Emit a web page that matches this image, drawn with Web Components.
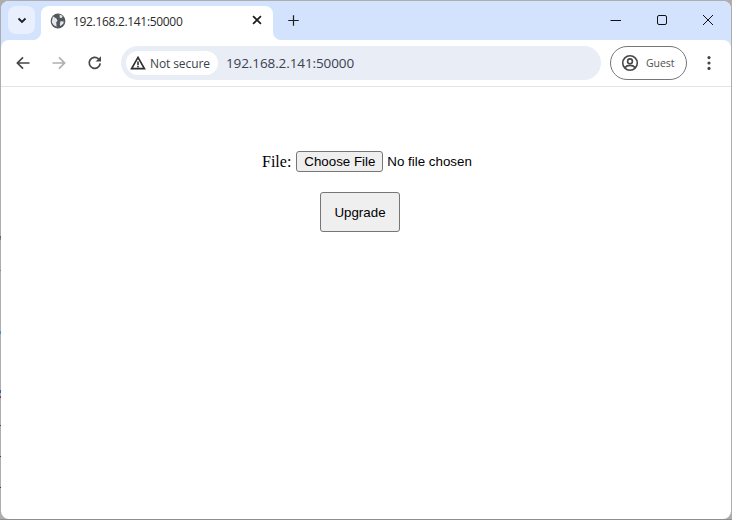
<!DOCTYPE html>
<html>
<head>
<meta charset="utf-8">
<title>192.168.2.141:50000</title>
<style>
  html, body { margin: 0; padding: 0; background: #fff; }
</style>
</head>
<body>
<browser-window>
  <tab-strip slot="strip" title-text="192.168.2.141:50000"></tab-strip>
  <tool-bar slot="bar" url="192.168.2.141:50000"></tool-bar>
  <upgrade-form></upgrade-form>
</browser-window>

<script>
const ICONS = {
  chevron: '<path d="M5.5 7.5 9 11 12.5 7.5" fill="none" stroke="currentColor" stroke-width="1.8"/>',
  globe: '<circle cx="8" cy="8" r="7.4" fill="#54585d"/><path d="M3 3.6 6.4 5.6l1.2 2.2-1.4 1.4.4 4.6C3.8 13 2 10.5 1.8 8.6zM9.6 1.4l3 1.6-.6 1.8-2.2.2zM10.4 8.2l3.4.2-.4 2-2.8 2.6-.8-1z" fill="#e4e7ec"/>',
  close: '<path d="M3.5 3.5 12.5 12.5M12.5 3.5 3.5 12.5" fill="none" stroke="currentColor" stroke-width="2"/>',
  plus: '<path d="M8 1.5v13M1.5 8h13" fill="none" stroke="currentColor" stroke-width="1.5"/>',
  back: '<path d="M14.5 8H2.6M8 2.4 2.4 8 8 13.6" fill="none" stroke="currentColor" stroke-width="1.7"/>',
  forward: '<path d="M1.5 8h11.9M8 2.4 13.6 8 8 13.6" fill="none" stroke="currentColor" stroke-width="1.7"/>',
  reload: '<path d="M13.2 8.4A5.5 5.5 0 1 1 11.6 4" fill="none" stroke="currentColor" stroke-width="1.7"/><path d="M14 1.2V6.6H8.6z" fill="currentColor"/>',
  warn: '<path d="M8 2.4 14.4 13.6H1.6z" fill="none" stroke="currentColor" stroke-width="1.7" stroke-linejoin="miter"/><path d="M7.2 6.4h1.6v3.8H7.2zM7.2 11h1.6v1.4H7.2z" fill="currentColor"/>',
  person: '<circle cx="9" cy="9" r="7.3" fill="none" stroke="currentColor" stroke-width="1.6"/><circle cx="9" cy="7.3" r="2.4" fill="none" stroke="currentColor" stroke-width="1.6"/><path d="M3.9 13.6c1.4-1.6 3.2-2.2 5.1-2.2s3.7.6 5.1 2.2" fill="none" stroke="currentColor" stroke-width="1.6"/>',
  dots: '<circle cx="8" cy="2.6" r="1.6" fill="currentColor"/><circle cx="8" cy="8" r="1.6" fill="currentColor"/><circle cx="8" cy="13.4" r="1.6" fill="currentColor"/>',
  minimize: '<path d="M0.5 6.5h10.5" fill="none" stroke="currentColor" stroke-width="1"/>',
  maximize: '<rect x="1.5" y="1.5" width="9" height="9" rx="1.5" fill="none" stroke="currentColor" stroke-width="1"/>',
  winclose: '<path d="M1 1 11 11M11 1 1 11" fill="none" stroke="currentColor" stroke-width="1"/>'
};

// bits of the desktop that show through at the left edge of the window
const EDGE_SPECKS = [
  [236, 2, '#2f6db5'], [238, 2, '#a8752f'], [270, 1, '#4a90d9'], [331, 3, '#3d8fd0'],
  [390, 3, '#2f5fa8'], [396, 2, '#8a3f4a'], [425, 1, '#7a2b3a'], [456, 1, '#4a3a3a'], [487, 1, '#4a3a3a']
];

function icon( name, size, box ) {
  return `<svg width="${size}" height="${size}" viewBox="0 0 ${box} ${box}" aria-hidden="true">${ICONS[name]}</svg>`;
}

class BrowserWindow extends HTMLElement {
  constructor() {
    super();
    const specks = EDGE_SPECKS.map( ( [top, height, colour] ) => {
      return `linear-gradient(${colour},${colour}) 0 ${top}px / 1px ${height}px no-repeat`;
    } ).join( ',' );
    const root = this.attachShadow( {mode: 'open'} );
    root.innerHTML = `
      <style>
      :host {
        background: ${specks}, linear-gradient(#8e8e8e,#8e8e8e) 0 519px / 100% 1px no-repeat, #adadad;
        box-sizing: border-box;
        display: block;
        height: 520px;
        overflow: hidden;
        width: 732px;
      }
      .frame {
        background: #fff;
        border-radius: 8px;
        box-sizing: border-box;
        display: flex;
        flex-direction: column;
        height: 518px;
        margin: 1px 1px 0 1px;
        overflow: hidden;
      }
      main { flex-grow: 1; }
      </style>
      <div class="frame">
        <slot name="strip"></slot>
        <slot name="bar"></slot>
        <main><slot></slot></main>
      </div>
    `;
  }
}

class TabStrip extends HTMLElement {
  constructor() {
    super();
    const root = this.attachShadow( {mode: 'open'} );
    root.innerHTML = `
      <style>
      :host {
        align-items: flex-end;
        background: #d3e3fd;
        color: #1f1f1f;
        display: flex;
        flex-shrink: 0;
        font-family: 'Open Sans', sans-serif;
        height: 39px;
      }
      button {
        align-items: center;
        background: none;
        border: none;
        color: inherit;
        display: flex;
        justify-content: center;
        margin: 0;
        padding: 0;
      }
      .list {
        align-self: flex-start;
        background: #e8f0fe;
        border-radius: 8px;
        height: 28px;
        margin: 5px 6px 0 7px;
        width: 27px;
      }
      .tab {
        align-items: center;
        background: #fff;
        border-radius: 8px 8px 0 0;
        box-sizing: border-box;
        display: flex;
        height: 34px;
        padding: 0 8px 4px 9px;
        position: relative;
        width: 232px;
      }
      .tab::before, .tab::after {
        bottom: 0;
        content: '';
        height: 8px;
        position: absolute;
        width: 8px;
      }
      .tab::before {
        background: radial-gradient( circle at 0 0, #d3e3fd 7.5px, #fff 8.5px );
        left: -8px;
      }
      .tab::after {
        background: radial-gradient( circle at 100% 0, #d3e3fd 7.5px, #fff 8.5px );
        right: -8px;
      }
      .title {
        color: #2b2b2b;
        flex-grow: 1;
        font-family: 'Open Sans', sans-serif;
        font-size: 12px;
        letter-spacing: -0.32px;
        margin-left: 7px;
        white-space: nowrap;
      }
      .close { height: 16px; margin-top: -2px; width: 16px; }
      .new {
        align-self: flex-start;
        height: 16px;
        margin: 11px 0 0 12px;
        width: 16px;
      }
      .spacer { flex-grow: 1; }
      .caption {
        align-self: flex-start;
        color: #111;
        display: flex;
        height: 12px;
        margin-top: 13px;
      }
      .caption button { height: 12px; width: 12px; }
      .min { margin-right: 34px; }
      .max { margin-right: 34px; }
      .end { margin-right: 17px; }
      </style>
      <button class="list">${icon( 'chevron', 18, 18 )}</button>
      <div class="tab">
        ${icon( 'globe', 16, 16 )}
        <span class="title"></span>
        <button class="close">${icon( 'close', 14, 16 )}</button>
      </div>
      <button class="new">${icon( 'plus', 13, 16 )}</button>
      <div class="spacer"></div>
      <div class="caption">
        <button class="min">${icon( 'minimize', 12, 12 )}</button>
        <button class="max">${icon( 'maximize', 12, 12 )}</button>
        <button class="end">${icon( 'winclose', 12, 12 )}</button>
      </div>
    `;
    root.querySelector( '.title' ).textContent = this.getAttribute( 'title-text' );
  }
}

class ToolBar extends HTMLElement {
  constructor() {
    super();
    const root = this.attachShadow( {mode: 'open'} );
    root.innerHTML = `
      <style>
      :host {
        background: #d3e3fd;
        display: block;
        flex-shrink: 0;
      }
      .bar {
        align-items: center;
        background: #fff;
        border-bottom: 1px solid #e1e3e6;
        border-radius: 8px 8px 0 0;
        color: #474747;
        display: flex;
        font-family: 'Open Sans', sans-serif;
        height: 46px;
        padding-left: 14px;
      }
      button {
        align-items: center;
        background: none;
        border: none;
        color: inherit;
        display: flex;
        justify-content: center;
        margin: 0;
        padding: 0;
      }
      .nav { height: 16px; width: 16px; }
      .forward { color: #adb0b4; margin-left: 20px; }
      .reload { margin-left: 20px; }
      .omni {
        align-items: center;
        background: #e9edf6;
        border-radius: 17px;
        box-sizing: border-box;
        display: flex;
        height: 34px;
        margin-left: 18px;
        padding-left: 5px;
        width: 480px;
      }
      .chip {
        align-items: center;
        background: #fff;
        border-radius: 12px;
        box-sizing: border-box;
        color: #3a3f4a;
        display: flex;
        font-size: 12px;
        height: 24px;
        padding-left: 4px;
        width: 92px;
      }
      .chip svg { color: #2f2f2f; margin-right: 4px; }
      .chip span { letter-spacing: -0.1px; white-space: nowrap; }
      .url {
        color: #3a4150;
        font-family: 'Open Sans', sans-serif;
        font-size: 13.5px;
        letter-spacing: -0.1px;
        margin-left: 8px;
        white-space: nowrap;
      }
      .guest {
        align-items: center;
        border: 1px solid #747775;
        border-radius: 17px;
        box-sizing: border-box;
        display: flex;
        font-size: 10.5px;
        height: 34px;
        margin-left: 9px;
        padding-left: 10px;
        width: 77px;
      }
      .guest span { color: #4f4f4f; letter-spacing: -0.05px; margin-left: 7px; }
      .more { height: 16px; margin-left: 14px; width: 16px; }
      </style>
      <div class="bar">
        <button class="nav back">${icon( 'back', 16, 16 )}</button>
        <button class="nav forward">${icon( 'forward', 16, 16 )}</button>
        <button class="nav reload">${icon( 'reload', 16, 16 )}</button>
        <div class="omni">
          <div class="chip">${icon( 'warn', 16, 16 )}<span>Not secure</span></div>
          <span class="url"></span>
        </div>
        <div class="guest">${icon( 'person', 18, 18 )}<span>Guest</span></div>
        <button class="more">${icon( 'dots', 16, 16 )}</button>
      </div>
    `;
    root.querySelector( '.url' ).textContent = this.getAttribute( 'url' );
  }
}

class UpgradeForm extends HTMLElement {
  constructor() {
    super();
    const root = this.attachShadow( {mode: 'open'} );
    root.innerHTML = `
      <style>
      :host {
        color: #000;
        display: flex;
        flex-direction: column;
        font-family: 'Liberation Serif', serif;
        font-size: 16px;
        padding: 64px 0 0 261px;
      }
      .row {
        align-items: center;
        display: flex;
        height: 21px;
      }
      button {
        background: #efefef;
        border: 1px solid #767676;
        border-radius: 3px;
        box-sizing: border-box;
        color: #000;
        font-family: 'Liberation Sans', sans-serif;
        font-size: 13.33px;
        margin: 0;
        padding: 0;
      }
      .choose { height: 21px; margin-left: 5px; width: 87px; }
      .none {
        font-family: 'Liberation Sans', sans-serif;
        font-size: 13.33px;
        margin-left: 4px;
        white-space: nowrap;
      }
      .upgrade { height: 40px; margin: 20px 0 0 58px; width: 80px; }
      </style>
      <div class="row">
        <span>File:</span>
        <button class="choose">Choose File</button>
        <span class="none">No file chosen</span>
      </div>
      <div><button class="upgrade">Upgrade</button></div>
    `;
  }
}

window.customElements.define( 'browser-window', BrowserWindow );
window.customElements.define( 'tab-strip', TabStrip );
window.customElements.define( 'tool-bar', ToolBar );
window.customElements.define( 'upgrade-form', UpgradeForm );
</script>
</body>
</html>
